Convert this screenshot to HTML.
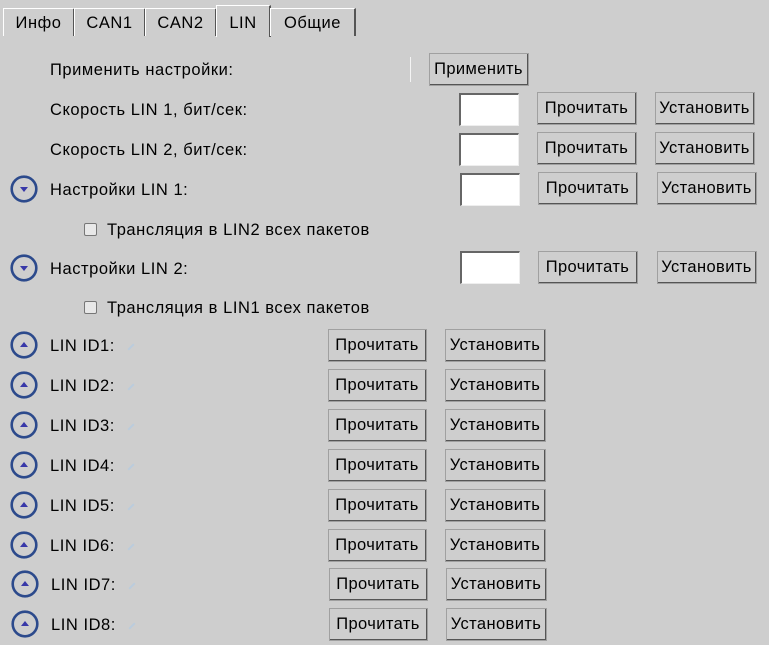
<!DOCTYPE html>
<html><head><meta charset="utf-8"><style>
html,body{margin:0;padding:0}
body{width:769px;height:645px;background:#cecece;position:relative;overflow:hidden;font-family:"Liberation Sans","DejaVu Sans",sans-serif;font-size:16.5px;letter-spacing:0.55px;color:#000}
.a{position:absolute;white-space:nowrap}
.tab{position:absolute;top:8px;height:28px;border-top:1px solid #fff;border-left:1px solid #fff;border-right:2px solid #555;box-sizing:border-box;text-align:center;line-height:28px;background:#cecece}
.tab.sel{top:5px;height:32px;line-height:34px}
.btn{position:absolute;height:33px;box-sizing:border-box;border-top:1px solid #fff;border-left:1px solid #fff;border-right:2px solid #555;border-bottom:2px solid #555;background:#cecece;text-align:center;line-height:31px;outline:1px solid #a0a0a0;outline-offset:-1px;letter-spacing:0.4px}
.inp{position:absolute;width:60px;height:33px;box-sizing:border-box;background:#fff;border-top:2px solid #666;border-left:2px solid #666;border-right:1px solid #eee;border-bottom:1px solid #eee}
.ic{position:absolute;width:28px;height:28px}
.cb{position:absolute;width:11px;height:11px;border:1px solid #777;border-radius:2px;background:#e8e8e8}
.pen{position:absolute;width:8px;height:2px;background:#bcd;transform:rotate(-45deg)}
</style></head><body>
<div class="tab" style="left:3px;width:72px">Инфо</div>
<div class="tab" style="left:74px;width:72px">CAN1</div>
<div class="tab" style="left:145px;width:72px">CAN2</div>
<div class="tab sel" style="left:216px;width:55px">LIN</div>
<div class="tab" style="left:270px;width:86px">Общие</div>

<div class="a" style="left:50px;top:61px">Применить настройки:</div>
<div class="a" style="left:410px;top:57px;width:1px;height:25px;background:#f4f4f4"></div>
<div class="btn" style="left:429px;top:53px;width:100px">Применить</div>

<div class="a" style="left:50px;top:101px">Скорость LIN 1, бит/сек:</div>
<div class="inp" style="left:459px;top:93px"></div>
<div class="btn" style="left:537px;top:92px;width:100px">Прочитать</div>
<div class="btn" style="left:655px;top:92px;width:100px">Установить</div>

<div class="a" style="left:50px;top:141px">Скорость LIN 2, бит/сек:</div>
<div class="inp" style="left:459px;top:133px"></div>
<div class="btn" style="left:537px;top:132px;width:100px">Прочитать</div>
<div class="btn" style="left:655px;top:132px;width:100px">Установить</div>

<svg class="ic" style="left:10px;top:175px" viewBox="0 0 28 28"><circle cx="14" cy="14" r="12.3" fill="none" stroke="#2c4a8c" stroke-width="2.6"/><path d="M10 12h8l-4 5z" fill="#3838a8"/></svg>
<div class="a" style="left:50px;top:181px">Настройки LIN 1:</div>
<div class="inp" style="left:460px;top:173px"></div>
<div class="btn" style="left:538px;top:172px;width:100px">Прочитать</div>
<div class="btn" style="left:657px;top:172px;width:100px">Установить</div>

<div class="cb" style="left:84px;top:223px"></div>
<div class="a" style="left:107px;top:221px">Трансляция в LIN2 всех пакетов</div>

<svg class="ic" style="left:10px;top:254px" viewBox="0 0 28 28"><circle cx="14" cy="14" r="12.3" fill="none" stroke="#2c4a8c" stroke-width="2.6"/><path d="M10 12h8l-4 5z" fill="#3838a8"/></svg>
<div class="a" style="left:50px;top:260px">Настройки LIN 2:</div>
<div class="inp" style="left:460px;top:251px"></div>
<div class="btn" style="left:538px;top:251px;width:100px">Прочитать</div>
<div class="btn" style="left:657px;top:251px;width:100px">Установить</div>

<div class="cb" style="left:84px;top:301px"></div>
<div class="a" style="left:107px;top:299px">Трансляция в LIN1 всех пакетов</div>

<svg class="ic" style="left:10px;top:331px" viewBox="0 0 28 28"><circle cx="14" cy="14" r="12.3" fill="none" stroke="#2c4a8c" stroke-width="2.6"/><path d="M10 16h8l-4 -5z" fill="#3838a8"/></svg>
<div class="a" style="left:50px;top:337px">LIN ID1:</div><div class="pen" style="left:127px;top:346px"></div>
<div class="btn" style="left:328px;top:329px;width:99px">Прочитать</div>
<div class="btn" style="left:445px;top:329px;width:101px">Установить</div>

<svg class="ic" style="left:10px;top:371px" viewBox="0 0 28 28"><circle cx="14" cy="14" r="12.3" fill="none" stroke="#2c4a8c" stroke-width="2.6"/><path d="M10 16h8l-4 -5z" fill="#3838a8"/></svg>
<div class="a" style="left:50px;top:377px">LIN ID2:</div><div class="pen" style="left:127px;top:386px"></div>
<div class="btn" style="left:328px;top:369px;width:99px">Прочитать</div>
<div class="btn" style="left:445px;top:369px;width:101px">Установить</div>

<svg class="ic" style="left:10px;top:411px" viewBox="0 0 28 28"><circle cx="14" cy="14" r="12.3" fill="none" stroke="#2c4a8c" stroke-width="2.6"/><path d="M10 16h8l-4 -5z" fill="#3838a8"/></svg>
<div class="a" style="left:50px;top:417px">LIN ID3:</div><div class="pen" style="left:127px;top:426px"></div>
<div class="btn" style="left:328px;top:409px;width:99px">Прочитать</div>
<div class="btn" style="left:445px;top:409px;width:101px">Установить</div>

<svg class="ic" style="left:10px;top:451px" viewBox="0 0 28 28"><circle cx="14" cy="14" r="12.3" fill="none" stroke="#2c4a8c" stroke-width="2.6"/><path d="M10 16h8l-4 -5z" fill="#3838a8"/></svg>
<div class="a" style="left:50px;top:457px">LIN ID4:</div><div class="pen" style="left:127px;top:466px"></div>
<div class="btn" style="left:328px;top:449px;width:99px">Прочитать</div>
<div class="btn" style="left:445px;top:449px;width:101px">Установить</div>

<svg class="ic" style="left:10px;top:491px" viewBox="0 0 28 28"><circle cx="14" cy="14" r="12.3" fill="none" stroke="#2c4a8c" stroke-width="2.6"/><path d="M10 16h8l-4 -5z" fill="#3838a8"/></svg>
<div class="a" style="left:50px;top:497px">LIN ID5:</div><div class="pen" style="left:127px;top:506px"></div>
<div class="btn" style="left:328px;top:489px;width:99px">Прочитать</div>
<div class="btn" style="left:445px;top:489px;width:101px">Установить</div>

<svg class="ic" style="left:10px;top:531px" viewBox="0 0 28 28"><circle cx="14" cy="14" r="12.3" fill="none" stroke="#2c4a8c" stroke-width="2.6"/><path d="M10 16h8l-4 -5z" fill="#3838a8"/></svg>
<div class="a" style="left:50px;top:537px">LIN ID6:</div><div class="pen" style="left:127px;top:546px"></div>
<div class="btn" style="left:328px;top:529px;width:99px">Прочитать</div>
<div class="btn" style="left:445px;top:529px;width:101px">Установить</div>

<svg class="ic" style="left:11px;top:570px" viewBox="0 0 28 28"><circle cx="14" cy="14" r="12.3" fill="none" stroke="#2c4a8c" stroke-width="2.6"/><path d="M10 16h8l-4 -5z" fill="#3838a8"/></svg>
<div class="a" style="left:51px;top:576px">LIN ID7:</div><div class="pen" style="left:128px;top:585px"></div>
<div class="btn" style="left:329px;top:568px;width:99px">Прочитать</div>
<div class="btn" style="left:446px;top:568px;width:101px">Установить</div>

<svg class="ic" style="left:11px;top:610px" viewBox="0 0 28 28"><circle cx="14" cy="14" r="12.3" fill="none" stroke="#2c4a8c" stroke-width="2.6"/><path d="M10 16h8l-4 -5z" fill="#3838a8"/></svg>
<div class="a" style="left:51px;top:616px">LIN ID8:</div><div class="pen" style="left:128px;top:625px"></div>
<div class="btn" style="left:329px;top:608px;width:99px">Прочитать</div>
<div class="btn" style="left:446px;top:608px;width:101px">Установить</div>
</body></html>
